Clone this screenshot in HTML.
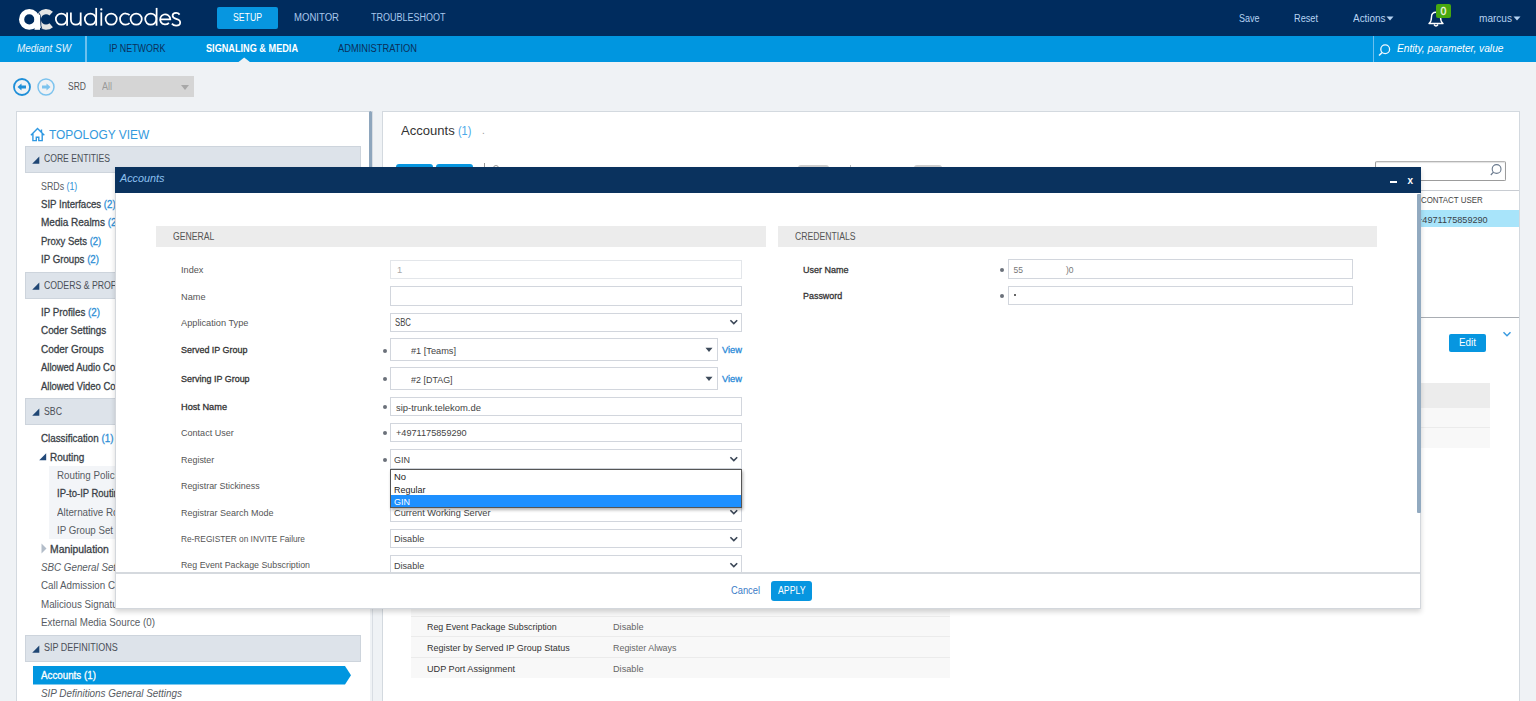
<!DOCTYPE html>
<html><head><meta charset="utf-8"><style>
*{margin:0;padding:0;box-sizing:border-box}
html,body{width:1536px;height:701px;overflow:hidden;background:#eff2f5;font-family:"Liberation Sans",sans-serif}
.a{position:absolute}
.t{position:absolute;white-space:nowrap;line-height:1;transform-origin:0 50%}
</style></head><body>
<div class="a" style="left:0px;top:0px;width:1536px;height:36px;background:#002c5e"></div>
<div class="a" style="left:0px;top:36px;width:1536px;height:26px;background:#0096e0"></div>
<div class="a" style="left:217px;top:7px;width:61px;height:22px;background:#0796e0;border-radius:2px"></div>
<div class="a" style="left:85px;top:36px;width:2px;height:26px;background:#6cc0ee"></div>
<div class="a" style="left:1372.5px;top:36px;width:1.5px;height:26px;background:#6cc0ee"></div>
<svg class="a" style="left:236px;top:57px" width="16" height="6"><path d="M2.2 5.2 L8.2 0.6 L14.2 5.2 Z" fill="#eff2f5"/></svg>
<svg class="a" style="left:0;top:0" width="200" height="35" viewBox="0 0 200 35">
<path d="M51.2 13.6 A7.75 7.75 0 1 0 51.2 25.2" fill="none" stroke="#e4e4e4" stroke-width="5.2"/>
<path d="M37.6 10.5 Q41.2 15 40.6 20 Q40.4 26 42.2 30" fill="none" stroke="#1d3f6a" stroke-width="1"/>
<circle cx="29.3" cy="19.4" r="7.7" fill="none" stroke="#fff" stroke-width="5.2"/>
<path d="M34.5 15 H40 V29.8 H34.5Z" fill="#fff"/>
<g fill="none" stroke="#fff" stroke-width="1.75">
<circle cx="61.4" cy="19.1" r="5.6"/><path d="M67.1 12.4 V25.7"/>
<path d="M70.9 12.4 V19.8 A4.9 4.9 0 0 0 80.7 19.8 M80.7 12.4 V25.7"/>
<circle cx="90.4" cy="19.1" r="5.6"/><path d="M96.2 7.9 V25.7"/>
<path d="M101.3 12.4 V25.7"/>
<circle cx="111.2" cy="19.1" r="5.6"/>
<path d="M129.6 15.2 A5.6 5.6 0 1 0 129.6 23.0"/>
<circle cx="136.2" cy="19.1" r="5.6"/>
<circle cx="150.8" cy="19.1" r="5.6"/><path d="M156.6 7.9 V25.7"/>
<path d="M160.2 19.4 H170.3 A5.1 5.1 0 1 0 168.9 22.9"/>
<path d="M179.6 14.6 Q178.3 12.9 176.1 12.9 Q172.6 12.9 172.6 15.6 Q172.6 18 176.1 18.9 Q180.2 19.9 180.2 22.4 Q180.2 25.5 176.1 25.5 Q173.4 25.5 171.9 23.6"/>
</g>
<circle cx="101.3" cy="9.4" r="1.15" fill="#fff"/>
</svg>
<svg class="a" style="left:1386px;top:16px" width="8" height="5"><path d="M0.5 0.5 L7.5 0.5 L4 4.5Z" fill="#b6d3f2"/></svg>
<svg class="a" style="left:1513px;top:16px" width="8" height="5"><path d="M0.5 0.5 L7.5 0.5 L4 4.5Z" fill="#b6d3f2"/></svg>
<svg class="a" style="left:1426px;top:8px" width="20" height="20" viewBox="0 0 20 20">
<path d="M3 15.5 Q5.5 13.5 5.5 9 Q5.5 4.2 10 4.2 Q14.5 4.2 14.5 9 Q14.5 13.5 17 15.5 Z" fill="none" stroke="#fff" stroke-width="1.4" stroke-linejoin="round"/>
<path d="M8 16.5 Q10 19.5 12 16.5" fill="none" stroke="#fff" stroke-width="1.4"/>
</svg>
<div class="a" style="left:1436px;top:4px;width:14.5px;height:14.3px;background:#47a80f;border-radius:2px"></div>
<div class="t" style="left:1440.5px;top:5.8px;font-size:10.5px;color:#f2f5e0;font-weight:400;-webkit-text-stroke:0.3px #f2f5e0">0</div>
<svg class="a" style="left:1376.5px;top:42.5px" width="15" height="14" viewBox="0 0 15 14">
<circle cx="8.2" cy="6.3" r="4.4" fill="none" stroke="#f0f8ff" stroke-width="1.3"/>
<path d="M5 9.6 L2 12.5" stroke="#f0f8ff" stroke-width="1.5"/></svg>
<svg class="a" style="left:12.3px;top:77.2px" width="20" height="20" viewBox="0 0 20 20">
<circle cx="10" cy="10" r="8" fill="none" stroke="#1e8fd8" stroke-width="1.8"/>
<path d="M5.5 10 L9.5 6.5 L9.5 8.6 L14 8.6 L14 11.4 L9.5 11.4 L9.5 13.5Z" fill="#1e8fd8"/></svg>
<svg class="a" style="left:35.5px;top:77px" width="20" height="20" viewBox="0 0 20 20">
<circle cx="10" cy="10" r="8" fill="none" stroke="#7cc3ee" stroke-width="1.5"/>
<path d="M14.5 10 L10.5 6.5 L10.5 8.6 L6 8.6 L6 11.4 L10.5 11.4 L10.5 13.5Z" fill="#7cc3ee"/></svg>
<div class="a" style="left:93px;top:76px;width:101px;height:21px;background:#d5d5d5"></div>
<svg class="a" style="left:180px;top:84px" width="10" height="7"><path d="M1 1 L9 1 L5 6Z" fill="#a8a8a8"/></svg>
<div class="a" style="left:16px;top:111px;width:354px;height:590px;background:#fff;border-left:1px solid #d3d9df;border-top:1px solid #d3d9df"></div>
<div class="a" style="left:371.5px;top:111px;width:1.0px;height:590px;background:#d8dde3"></div>
<div class="a" style="left:369px;top:111px;width:3px;height:449px;background:#8ea6bd;border-radius:1.5px"></div>
<svg class="a" style="left:30px;top:127px" width="16" height="15" viewBox="0 0 16 15">
<path d="M0.9 8.3 L7.5 1.6 L14.3 8.3 M2.9 6.4 V13.6 H6.3 V10.3 H8.8 V13.6 H12.2 V6.4 M11.5 2.4 V5.2" fill="none" stroke="#2e98e2" stroke-width="1.4" stroke-linejoin="miter"/></svg>
<div class="a" style="left:25px;top:145.5px;width:336px;height:27.0px;background:#dde3ea;border:1px solid #cdd4dc"></div>
<svg class="a" style="left:32px;top:155.5px" width="8" height="9"><path d="M0.2 7.8 L7.3 7.8 L7.3 0.5Z" fill="#1f4674"/></svg>
<div class="a" style="left:25px;top:271.5px;width:336px;height:27.0px;background:#dde3ea;border:1px solid #cdd4dc"></div>
<svg class="a" style="left:32px;top:281.5px" width="8" height="9"><path d="M0.2 7.8 L7.3 7.8 L7.3 0.5Z" fill="#1f4674"/></svg>
<div class="a" style="left:25px;top:398px;width:336px;height:27px;background:#dde3ea;border:1px solid #cdd4dc"></div>
<svg class="a" style="left:32px;top:408px" width="8" height="9"><path d="M0.2 7.8 L7.3 7.8 L7.3 0.5Z" fill="#1f4674"/></svg>
<div class="a" style="left:25px;top:635px;width:336px;height:27px;background:#dde3ea;border:1px solid #cdd4dc"></div>
<svg class="a" style="left:32px;top:645px" width="8" height="9"><path d="M0.2 7.8 L7.3 7.8 L7.3 0.5Z" fill="#1f4674"/></svg>
<svg class="a" style="left:38.8px;top:452.6px" width="8" height="8"><path d="M0.2 7.3 L7.2 7.3 L7.2 0.3Z" fill="#22497a"/></svg>
<div class="a" style="left:49px;top:465.6px;width:321px;height:73.10000000000002px;background:#f3f5f8"></div>
<svg class="a" style="left:40.5px;top:543px" width="7" height="12"><path d="M0.5 0.5 L5.5 5.5 L0.5 10.5Z" fill="#b3bdc9"/></svg>
<svg class="a" style="left:33px;top:665.5px" width="320" height="19"><path d="M0 0 L312 0 L318 9.25 L312 18.5 L0 18.5Z" fill="#0096e0"/></svg>
<div class="a" style="left:382px;top:111px;width:1138px;height:590px;background:#fff;border:1px solid #d3d9df;border-bottom:none"></div>
<div class="t" style="left:482px;top:126px;font-size:10px;color:#999">.</div>
<div class="a" style="left:396px;top:164px;width:37px;height:8px;background:#0796e0;border-radius:3px 3px 0 0"></div>
<div class="a" style="left:436px;top:164px;width:37px;height:8px;background:#0796e0;border-radius:3px 3px 0 0"></div>
<div class="a" style="left:798px;top:165px;width:31px;height:7px;background:#cfcfcf;border-radius:3px 3px 0 0"></div>
<div class="a" style="left:484px;top:163px;width:1px;height:7px;background:#999"></div>
<div class="a" style="left:493px;top:164.5px;width:6px;height:6px;border-radius:50%;border:1px solid #999"></div>
<div class="a" style="left:849.5px;top:165px;width:1.0px;height:5px;background:#bbb"></div>
<div class="a" style="left:914px;top:165px;width:28px;height:7px;background:#cfcfcf;border-radius:3px 3px 0 0"></div>
<div class="a" style="left:1374.5px;top:161px;width:131.5px;height:20px;background:#fff;border:1px solid #9c9c9c;border-top-color:#b5b5b5;border-radius:2px;box-shadow:inset 0 1px 1px rgba(0,0,0,0.12)"></div>
<svg class="a" style="left:1489px;top:163px" width="14" height="14" viewBox="0 0 14 14">
<circle cx="7.6" cy="6" r="4.4" fill="none" stroke="#6a7a8e" stroke-width="1.1"/>
<path d="M4.5 9.2 L1.8 12" stroke="#6a7a8e" stroke-width="1.2"/></svg>
<div class="a" style="left:383px;top:190px;width:1136px;height:1px;background:#c8ccd2"></div>
<div class="a" style="left:1410px;top:210px;width:108.5px;height:17px;background:#a8e4fa"></div>
<div class="a" style="left:383px;top:317px;width:1136px;height:1px;background:#a9adb3"></div>
<div class="a" style="left:1449px;top:334px;width:37px;height:17.5px;background:#0796e0;border-radius:2px"></div>
<svg class="a" style="left:1502px;top:331px" width="10" height="7"><path d="M1.5 1.2 L5 4.7 L8.5 1.2" fill="none" stroke="#3a9be0" stroke-width="1.5"/></svg>
<div class="a" style="left:970px;top:383px;width:520px;height:25px;background:#ececec"></div>
<div class="a" style="left:970px;top:408px;width:520px;height:20px;background:#f8f8f8;border-bottom:1px solid #ebebeb"></div>
<div class="a" style="left:970px;top:428px;width:520px;height:20px;background:#f8f8f8"></div>
<div class="a" style="left:411px;top:596px;width:539px;height:20.5px;background:#f8f8f8;border-bottom:1px solid #ebebeb"></div>
<div class="a" style="left:411px;top:616.5px;width:539px;height:20.5px;background:#f8f8f8;border-bottom:1px solid #ebebeb"></div>
<div class="a" style="left:411px;top:637px;width:539px;height:20.5px;background:#f8f8f8;border-bottom:1px solid #ebebeb"></div>
<div class="a" style="left:411px;top:657.5px;width:539px;height:20.0px;background:#f8f8f8"></div>
<div class="t" id="t0" style="left:233.0px;top:13.3px;font-size:10.0px;font-weight:400;font-style:normal;color:#fff;transform:scaleX(0.8697);">SETUP</div>
<div class="t" id="t1" style="left:293.6px;top:13.3px;font-size:10.0px;font-weight:400;font-style:normal;color:#a9c8ec;transform:scaleX(0.9565);">MONITOR</div>
<div class="t" id="t2" style="left:370.6px;top:13.3px;font-size:10.0px;font-weight:400;font-style:normal;color:#a9c8ec;transform:scaleX(0.8986);">TROUBLESHOOT</div>
<div class="t" id="t3" style="left:1238.5px;top:13.2px;font-size:10.5px;font-weight:400;font-style:normal;color:#b6d3f2;transform:scaleX(0.8564);">Save</div>
<div class="t" id="t4" style="left:1294.0px;top:13.2px;font-size:10.5px;font-weight:400;font-style:normal;color:#b6d3f2;transform:scaleX(0.8747);">Reset</div>
<div class="t" id="t5" style="left:1353.0px;top:13.2px;font-size:10.5px;font-weight:400;font-style:normal;color:#b6d3f2;transform:scaleX(0.9466);">Actions</div>
<div class="t" id="t6" style="left:1479.0px;top:13.2px;font-size:10.5px;font-weight:400;font-style:normal;color:#b6d3f2;transform:scaleX(0.9583);">marcus</div>
<div class="t" id="t7" style="left:17.0px;top:43.5px;font-size:10.0px;font-weight:400;font-style:italic;color:#e8f4fd;transform:scaleX(0.9914);">Mediant SW</div>
<div class="t" id="t8" style="left:109.0px;top:43.7px;font-size:10.0px;font-weight:400;font-style:normal;color:#0b2f5a;transform:scaleX(0.8930);">IP NETWORK</div>
<div class="t" id="t9" style="left:206.0px;top:43.7px;font-size:10.0px;font-weight:700;font-style:normal;color:#ffffff;transform:scaleX(0.9149);">SIGNALING &amp; MEDIA</div>
<div class="t" id="t10" style="left:338.0px;top:43.7px;font-size:10.0px;font-weight:400;font-style:normal;color:#0b2f5a;transform:scaleX(0.9313);">ADMINISTRATION</div>
<div class="t" id="t11" style="left:1396.5px;top:43.0px;font-size:10.5px;font-weight:400;font-style:italic;color:#ffffff;transform:scaleX(0.9723);">Entity, parameter, value</div>
<div class="t" id="t12" style="left:68.0px;top:82.3px;font-size:10.0px;font-weight:400;font-style:normal;color:#555;transform:scaleX(0.8521);">SRD</div>
<div class="t" id="t13" style="left:101.7px;top:82.3px;font-size:10.0px;font-weight:400;font-style:normal;color:#9a9a9a;transform:scaleX(0.8989);">All</div>
<div class="t" id="t14" style="left:49.4px;top:127.6px;font-size:13.5px;font-weight:400;font-style:normal;color:#3399dd;transform:scaleX(0.8835);">TOPOLOGY VIEW</div>
<div class="t" id="t15" style="left:43.6px;top:154.1px;font-size:10.0px;font-weight:400;font-style:normal;color:#4a4f57;transform:scaleX(0.8606);">CORE ENTITIES</div>
<div class="t" id="t16" style="left:43.6px;top:280.7px;font-size:10.0px;font-weight:400;font-style:normal;color:#4a4f57;transform:scaleX(0.8715);">CODERS &amp; PROFILES</div>
<div class="t" id="t17" style="left:43.6px;top:406.8px;font-size:10.0px;font-weight:400;font-style:normal;color:#4a4f57;transform:scaleX(0.8715);">SBC</div>
<div class="t" id="t18" style="left:43.6px;top:643.3px;font-size:10.0px;font-weight:400;font-style:normal;color:#4a4f57;transform:scaleX(0.8981);">SIP DEFINITIONS</div>
<div class="t" id="t19" style="left:41.0px;top:180.6px;font-size:10.5px;font-weight:400;font-style:normal;color:#575c63;transform:scaleX(0.8405);">SRDs <span style="color:#2e8fd6">(1)</span></div>
<div class="t" id="t20" style="left:41.0px;top:199.0px;font-size:10.5px;font-weight:400;-webkit-text-stroke:0.3px currentColor;font-style:normal;color:#3a3f47;transform:scaleX(0.9150);">SIP Interfaces <span style="color:#2e8fd6">(2)</span></div>
<div class="t" id="t21" style="left:41.0px;top:217.4px;font-size:10.5px;font-weight:400;-webkit-text-stroke:0.3px currentColor;font-style:normal;color:#3a3f47;transform:scaleX(0.9532);">Media Realms <span style="color:#2e8fd6">(2)</span></div>
<div class="t" id="t22" style="left:41.0px;top:236.0px;font-size:10.5px;font-weight:400;-webkit-text-stroke:0.3px currentColor;font-style:normal;color:#3a3f47;transform:scaleX(0.9063);">Proxy Sets <span style="color:#2e8fd6">(2)</span></div>
<div class="t" id="t23" style="left:41.0px;top:254.4px;font-size:10.5px;font-weight:400;-webkit-text-stroke:0.3px currentColor;font-style:normal;color:#3a3f47;transform:scaleX(0.9229);">IP Groups <span style="color:#2e8fd6">(2)</span></div>
<div class="t" id="t24" style="left:40.6px;top:306.7px;font-size:10.5px;font-weight:400;-webkit-text-stroke:0.3px currentColor;font-style:normal;color:#3a3f47;transform:scaleX(0.9287);">IP Profiles <span style="color:#2e8fd6">(2)</span></div>
<div class="t" id="t25" style="left:40.6px;top:325.3px;font-size:10.5px;font-weight:400;-webkit-text-stroke:0.3px currentColor;font-style:normal;color:#3a3f47;transform:scaleX(0.9400);">Coder Settings</div>
<div class="t" id="t26" style="left:40.6px;top:343.7px;font-size:10.5px;font-weight:400;-webkit-text-stroke:0.3px currentColor;font-style:normal;color:#3a3f47;transform:scaleX(0.9507);">Coder Groups</div>
<div class="t" id="t27" style="left:40.6px;top:362.0px;font-size:10.5px;font-weight:400;-webkit-text-stroke:0.3px currentColor;font-style:normal;color:#3a3f47;transform:scaleX(0.9010);">Allowed Audio Coders Groups</div>
<div class="t" id="t28" style="left:40.6px;top:380.5px;font-size:10.5px;font-weight:400;-webkit-text-stroke:0.3px currentColor;font-style:normal;color:#3a3f47;transform:scaleX(0.9010);">Allowed Video Coders Groups</div>
<div class="t" id="t29" style="left:40.6px;top:433.4px;font-size:10.5px;font-weight:400;-webkit-text-stroke:0.3px currentColor;font-style:normal;color:#3a3f47;transform:scaleX(0.9327);">Classification <span style="color:#2e8fd6">(1)</span></div>
<div class="t" id="t30" style="left:49.6px;top:452.0px;font-size:10.5px;font-weight:400;-webkit-text-stroke:0.3px currentColor;font-style:normal;color:#3a3f47;transform:scaleX(0.9502);">Routing</div>
<div class="t" id="t31" style="left:56.7px;top:470.2px;font-size:10.5px;font-weight:400;font-style:normal;color:#575c63;transform:scaleX(0.9324);">Routing Policies</div>
<div class="t" id="t32" style="left:56.7px;top:488.4px;font-size:10.5px;font-weight:400;-webkit-text-stroke:0.3px currentColor;font-style:normal;color:#3a3f47;transform:scaleX(0.9010);">IP-to-IP Routing</div>
<div class="t" id="t33" style="left:56.7px;top:506.6px;font-size:10.5px;font-weight:400;font-style:normal;color:#575c63;transform:scaleX(0.9324);">Alternative Routing Reasons</div>
<div class="t" id="t34" style="left:56.7px;top:525.2px;font-size:10.5px;font-weight:400;font-style:normal;color:#575c63;transform:scaleX(0.9254);">IP Group Set</div>
<div class="t" id="t35" style="left:49.5px;top:543.6px;font-size:10.5px;font-weight:400;-webkit-text-stroke:0.3px currentColor;font-style:normal;color:#3a3f47;transform:scaleX(0.9891);">Manipulation</div>
<div class="t" id="t36" style="left:40.8px;top:562.0px;font-size:10.5px;font-weight:400;font-style:italic;color:#575c63;transform:scaleX(0.9324);">SBC General Settings</div>
<div class="t" id="t37" style="left:40.8px;top:580.0px;font-size:10.5px;font-weight:400;font-style:normal;color:#575c63;transform:scaleX(0.9324);">Call Admission Control</div>
<div class="t" id="t38" style="left:40.8px;top:598.5px;font-size:10.5px;font-weight:400;font-style:normal;color:#575c63;transform:scaleX(0.9324);">Malicious Signature</div>
<div class="t" id="t39" style="left:40.8px;top:617.0px;font-size:10.5px;font-weight:400;font-style:normal;color:#575c63;transform:scaleX(0.9345);">External Media Source (0)</div>
<div class="t" id="t40" style="left:40.8px;top:688.3px;font-size:10.5px;font-weight:400;font-style:italic;color:#575c63;transform:scaleX(0.9425);">SIP Definitions General Settings</div>
<div class="t" id="t41" style="left:40.8px;top:670.0px;font-size:10.5px;font-weight:400;-webkit-text-stroke:0.3px currentColor;font-style:normal;color:#fff;transform:scaleX(0.9312);">Accounts (1)</div>
<div class="t" id="t42" style="left:400.5px;top:123.8px;font-size:13px;font-weight:400;font-style:normal;color:#333;transform:scaleX(1.0040);">Accounts</div>
<div class="t" id="t43" style="left:457.7px;top:123.8px;font-size:13px;font-weight:400;font-style:normal;color:#4aa8e8;transform:scaleX(0.8370);">(1)</div>
<div class="t" id="t44" style="left:1421.0px;top:195.1px;font-size:9.5px;font-weight:400;font-style:normal;color:#444;transform:scaleX(0.8329);">CONTACT USER</div>
<div class="t" id="t45" style="left:1417.0px;top:214.5px;font-size:9.5px;font-weight:400;font-style:normal;color:#3a3f47;transform:scaleX(0.9615);">+4971175859290</div>
<div class="t" id="t46" style="left:1459.0px;top:338.0px;font-size:10.0px;font-weight:400;font-style:normal;color:#fff;transform:scaleX(0.9864);">Edit</div>
<div class="t" id="t47" style="left:427.3px;top:622.1px;font-size:9.5px;font-weight:400;font-style:normal;color:#333;transform:scaleX(0.9338);">Reg Event Package Subscription</div>
<div class="t" id="t48" style="left:612.8px;top:622.1px;font-size:9.5px;font-weight:400;font-style:normal;color:#666;transform:scaleX(0.9625);">Disable</div>
<div class="t" id="t49" style="left:427.3px;top:642.8px;font-size:9.5px;font-weight:400;font-style:normal;color:#333;transform:scaleX(0.9459);">Register by Served IP Group Status</div>
<div class="t" id="t50" style="left:612.8px;top:642.8px;font-size:9.5px;font-weight:400;font-style:normal;color:#666;transform:scaleX(0.9394);">Register Always</div>
<div class="t" id="t51" style="left:427.3px;top:663.5px;font-size:9.5px;font-weight:400;font-style:normal;color:#333;transform:scaleX(0.9596);">UDP Port Assignment</div>
<div class="t" id="t52" style="left:612.8px;top:663.5px;font-size:9.5px;font-weight:400;font-style:normal;color:#666;transform:scaleX(0.9625);">Disable</div>
<div class="a" style="left:115px;top:167px;width:1306px;height:441.5px;background:#fff;box-shadow:0 3px 5px rgba(0,0,0,0.16);border:1px solid #d3d7dc;border-top:none"></div>
<div class="a" style="left:115px;top:167px;width:1306px;height:26px;background:#0a325e"></div>
<div class="a" style="left:1390px;top:181px;width:6.5px;height:2px;background:#fff"></div>
<div class="t" style="left:1407.5px;top:175.5px;font-size:10px;font-weight:700;color:#fff">x</div>
<div class="a" style="left:1417px;top:194px;width:3.5px;height:319px;background:#92aac0;border-radius:1px"></div>
<div class="a" style="left:156px;top:225.6px;width:610px;height:21.400000000000006px;background:#ececec"></div>
<div class="a" style="left:778px;top:225.8px;width:599px;height:21.19999999999999px;background:#ececec"></div>
<div class="a" style="left:390px;top:259.5px;width:352px;height:19.5px;background:#fff;border:1px solid #e3e6ea"></div>
<div class="a" style="left:390px;top:286.4px;width:352px;height:19.200000000000045px;background:#fff;border:1px solid #d2d6dd"></div>
<div class="a" style="left:390px;top:312.5px;width:352px;height:19.19999999999999px;background:#fff;border:1px solid #d2d6dd"></div>
<svg class="a" style="left:729.0px;top:319px" width="10" height="7"><path d="M1.4 1.3 L4.8 4.6 L8.2 1.3" fill="none" stroke="#3a4656" stroke-width="1.6"/></svg>
<div class="a" style="left:382.5px;top:348.5px;width:4px;height:4px;border-radius:50%;background:#6b717a"></div>
<div class="a" style="left:390px;top:338.4px;width:327.5px;height:22.600000000000023px;background:#fff;border:1px solid #d2d6dd"></div>
<svg class="a" style="left:705px;top:347px" width="8" height="6"><path d="M0.5 0.8 L7.5 0.8 L4 5Z" fill="#3d4a5a"/></svg>
<div class="a" style="left:382.5px;top:377px;width:4px;height:4px;border-radius:50%;background:#6b717a"></div>
<div class="a" style="left:390px;top:367.3px;width:327.5px;height:22.30000000000001px;background:#fff;border:1px solid #d2d6dd"></div>
<svg class="a" style="left:705px;top:376px" width="8" height="6"><path d="M0.5 0.8 L7.5 0.8 L4 5Z" fill="#3d4a5a"/></svg>
<div class="a" style="left:382.5px;top:404.5px;width:4px;height:4px;border-radius:50%;background:#6b717a"></div>
<div class="a" style="left:390px;top:396.5px;width:352px;height:19.0px;background:#fff;border:1px solid #d2d6dd"></div>
<div class="a" style="left:382.5px;top:431px;width:4px;height:4px;border-radius:50%;background:#6b717a"></div>
<div class="a" style="left:390px;top:423px;width:352px;height:19px;background:#fff;border:1px solid #d2d6dd"></div>
<div class="a" style="left:382.5px;top:457.5px;width:4px;height:4px;border-radius:50%;background:#6b717a"></div>
<div class="a" style="left:390px;top:449px;width:352px;height:19.5px;background:#fff;border:1px solid #d2d6dd"></div>
<svg class="a" style="left:729.0px;top:456px" width="10" height="7"><path d="M1.4 1.3 L4.8 4.6 L8.2 1.3" fill="none" stroke="#3a4656" stroke-width="1.6"/></svg>
<div class="a" style="left:390px;top:476px;width:352px;height:19px;background:#fff;border:1px solid #d2d6dd"></div>
<div class="a" style="left:390px;top:502.6px;width:352px;height:19.0px;background:#fff;border:1px solid #d2d6dd"></div>
<svg class="a" style="left:729.0px;top:509px" width="10" height="7"><path d="M1.4 1.3 L4.8 4.6 L8.2 1.3" fill="none" stroke="#3a4656" stroke-width="1.6"/></svg>
<div class="a" style="left:390px;top:528.6px;width:352px;height:19.0px;background:#fff;border:1px solid #d2d6dd"></div>
<svg class="a" style="left:729.0px;top:535.5px" width="10" height="7"><path d="M1.4 1.3 L4.8 4.6 L8.2 1.3" fill="none" stroke="#3a4656" stroke-width="1.6"/></svg>
<div class="a" style="left:390px;top:555px;width:352px;height:19px;background:#fff;border:1px solid #d2d6dd"></div>
<svg class="a" style="left:729.0px;top:562px" width="10" height="7"><path d="M1.4 1.3 L4.8 4.6 L8.2 1.3" fill="none" stroke="#3a4656" stroke-width="1.6"/></svg>
<div class="a" style="left:1000px;top:267.5px;width:4px;height:4px;border-radius:50%;background:#6b717a"></div>
<div class="a" style="left:1008px;top:259.4px;width:345px;height:19.400000000000034px;background:#fff;border:1px solid #d2d6dd"></div>
<div class="a" style="left:1000px;top:293.8px;width:4px;height:4px;border-radius:50%;background:#6b717a"></div>
<div class="a" style="left:1008px;top:286.3px;width:345px;height:19.0px;background:#fff;border:1px solid #d2d6dd"></div>
<div class="a" style="left:1014px;top:294px;width:2px;height:2px;background:#666"></div>
<div class="a" style="left:116px;top:572px;width:1304px;height:35.5px;background:#fff;border-top:2px solid #d5d9de"></div>
<div class="a" style="left:771px;top:581px;width:41px;height:20px;background:#0796e0;border-radius:3px"></div>
<div class="t" id="t53" style="left:119.6px;top:173.1px;font-size:11.5px;font-weight:400;font-style:italic;color:#8cc0f0;transform:scaleX(0.9384);">Accounts</div>
<div class="t" id="t54" style="left:172.6px;top:231.8px;font-size:10px;font-weight:400;font-style:normal;color:#555;transform:scaleX(0.8662);">GENERAL</div>
<div class="t" id="t55" style="left:794.6px;top:231.8px;font-size:10px;font-weight:400;font-style:normal;color:#555;transform:scaleX(0.8655);">CREDENTIALS</div>
<div class="t" id="t56" style="left:180.9px;top:265.2px;font-size:9.5px;font-weight:400;font-style:normal;color:#555;transform:scaleX(0.9634);">Index</div>
<div class="t" id="t57" style="left:180.9px;top:291.5px;font-size:9.5px;font-weight:400;font-style:normal;color:#555;transform:scaleX(0.9667);">Name</div>
<div class="t" id="t58" style="left:180.9px;top:318.3px;font-size:9.5px;font-weight:400;font-style:normal;color:#555;transform:scaleX(0.9691);">Application Type</div>
<div class="t" id="t59" style="left:180.9px;top:344.8px;font-size:9.5px;font-weight:400;-webkit-text-stroke:0.3px currentColor;font-style:normal;color:#333;transform:scaleX(0.9420);">Served IP Group</div>
<div class="t" id="t60" style="left:180.9px;top:374.3px;font-size:9.5px;font-weight:400;-webkit-text-stroke:0.3px currentColor;font-style:normal;color:#333;transform:scaleX(0.9436);">Serving IP Group</div>
<div class="t" id="t61" style="left:180.9px;top:402.3px;font-size:9.5px;font-weight:400;-webkit-text-stroke:0.3px currentColor;font-style:normal;color:#333;transform:scaleX(0.9681);">Host Name</div>
<div class="t" id="t62" style="left:180.9px;top:428.3px;font-size:9.5px;font-weight:400;font-style:normal;color:#555;transform:scaleX(0.9524);">Contact User</div>
<div class="t" id="t63" style="left:180.9px;top:454.9px;font-size:9.5px;font-weight:400;font-style:normal;color:#555;transform:scaleX(0.9413);">Register</div>
<div class="t" id="t64" style="left:180.9px;top:480.9px;font-size:9.5px;font-weight:400;font-style:normal;color:#555;transform:scaleX(0.9362);">Registrar Stickiness</div>
<div class="t" id="t65" style="left:180.9px;top:507.5px;font-size:9.5px;font-weight:400;font-style:normal;color:#555;transform:scaleX(0.9459);">Registrar Search Mode</div>
<div class="t" id="t66" style="left:180.9px;top:534.1px;font-size:9.5px;font-weight:400;font-style:normal;color:#555;transform:scaleX(0.8731);">Re-REGISTER on INVITE Failure</div>
<div class="t" id="t67" style="left:180.9px;top:560.4px;font-size:9.5px;font-weight:400;font-style:normal;color:#555;transform:scaleX(0.9288);">Reg Event Package Subscription</div>
<div class="t" id="t68" style="left:802.5px;top:265.1px;font-size:9.5px;font-weight:400;-webkit-text-stroke:0.3px currentColor;font-style:normal;color:#333;transform:scaleX(0.9470);">User Name</div>
<div class="t" id="t69" style="left:802.5px;top:291.3px;font-size:9.5px;font-weight:400;-webkit-text-stroke:0.3px currentColor;font-style:normal;color:#333;transform:scaleX(0.9396);">Password</div>
<div class="t" id="t70" style="left:397.0px;top:265.0px;font-size:9.5px;font-weight:400;font-style:normal;color:#aaa;">1</div>
<div class="t" id="t71" style="left:394.7px;top:317.6px;font-size:10px;font-weight:400;font-style:normal;color:#444;transform:scaleX(0.7733);">SBC</div>
<div class="t" id="t72" style="left:411.4px;top:345.5px;font-size:9.5px;font-weight:400;font-style:normal;color:#444;transform:scaleX(0.9684);">#1 [Teams]</div>
<div class="t" id="t73" style="left:411.4px;top:374.5px;font-size:9.5px;font-weight:400;font-style:normal;color:#444;transform:scaleX(0.9418);">#2 [DTAG]</div>
<div class="t" id="t74" style="left:722.0px;top:344.8px;font-size:9.5px;font-weight:400;-webkit-text-stroke:0.3px currentColor;font-style:normal;color:#2a8ad8;transform:scaleX(0.9793);">View</div>
<div class="t" id="t75" style="left:722.0px;top:373.5px;font-size:9.5px;font-weight:400;-webkit-text-stroke:0.3px currentColor;font-style:normal;color:#2a8ad8;transform:scaleX(0.9793);">View</div>
<div class="t" id="t76" style="left:396.0px;top:402.5px;font-size:9.5px;font-weight:400;font-style:normal;color:#444;transform:scaleX(0.9936);">sip-trunk.telekom.de</div>
<div class="t" id="t77" style="left:395.7px;top:428.0px;font-size:9.5px;font-weight:400;font-style:normal;color:#444;transform:scaleX(0.9615);">+4971175859290</div>
<div class="t" id="t78" style="left:394.2px;top:455.3px;font-size:9.5px;font-weight:400;font-style:normal;color:#444;transform:scaleX(0.9473);">GIN</div>
<div class="t" id="t79" style="left:394.2px;top:508.0px;font-size:9.5px;font-weight:400;font-style:normal;color:#444;transform:scaleX(0.9688);">Current Working Server</div>
<div class="t" id="t80" style="left:394.2px;top:533.9px;font-size:9.5px;font-weight:400;font-style:normal;color:#444;transform:scaleX(0.9562);">Disable</div>
<div class="t" id="t81" style="left:394.2px;top:561.0px;font-size:9.5px;font-weight:400;font-style:normal;color:#444;transform:scaleX(0.9562);">Disable</div>
<div class="t" id="t82" style="left:1013.5px;top:265.5px;font-size:8.5px;font-weight:400;font-style:normal;color:#777;">55</div>
<div class="t" id="t83" style="left:1066.0px;top:265.5px;font-size:8.5px;font-weight:400;font-style:normal;color:#777;">)0</div>
<div class="t" id="t87" style="left:731.3px;top:586.3px;font-size:10.0px;font-weight:400;font-style:normal;color:#3b7cc7;transform:scaleX(0.9313);">Cancel</div>
<div class="t" id="t88" style="left:777.6px;top:586.3px;font-size:10.0px;font-weight:400;font-style:normal;color:#fff;transform:scaleX(0.8762);">APPLY</div>
<div class="a" style="left:390px;top:469.3px;width:352px;height:39.19999999999999px;background:#fff;border:1px solid #555;box-shadow:1px 2px 3px rgba(0,0,0,0.3)"></div>
<div class="a" style="left:391px;top:495.4px;width:350px;height:12.100000000000023px;background:#1e90ff"></div>
<div class="t" id="t84" style="left:394.2px;top:471.9px;font-size:9.5px;font-weight:400;font-style:normal;color:#222;transform:scaleX(0.9871);">No</div>
<div class="t" id="t85" style="left:394.2px;top:484.5px;font-size:9.5px;font-weight:400;font-style:normal;color:#222;transform:scaleX(0.9435);">Regular</div>
<div class="t" id="t86" style="left:394.2px;top:497.1px;font-size:9.5px;font-weight:400;font-style:normal;color:#fff;transform:scaleX(0.9473);">GIN</div>
</body></html>
